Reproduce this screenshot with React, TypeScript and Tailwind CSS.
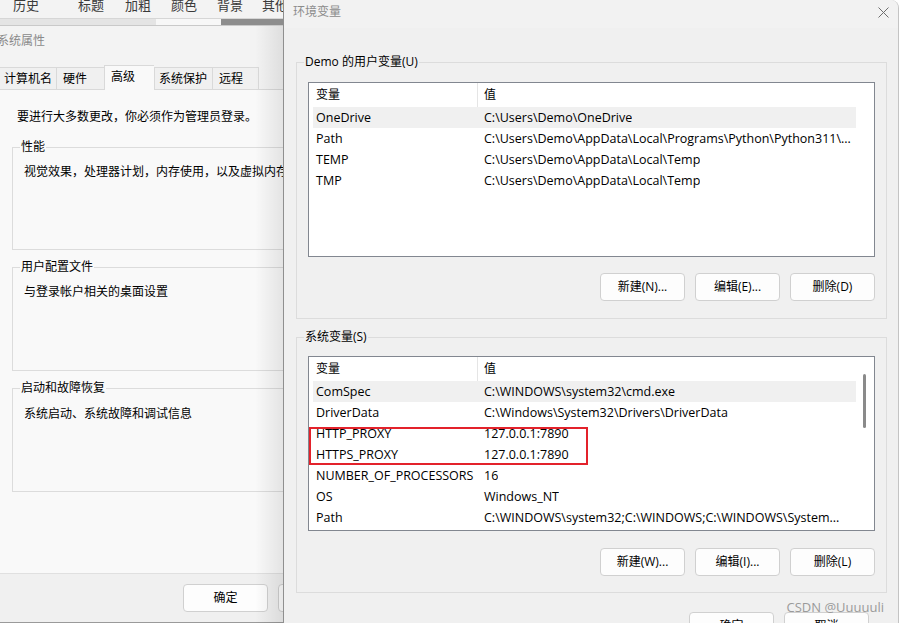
import React from "react";

type Row = [string, string];

const userVars: Row[] = [
  ["OneDrive", "C:\\Users\\Demo\\OneDrive"],
  ["Path", "C:\\Users\\Demo\\AppData\\Local\\Programs\\Python\\Python311\\..."],
  ["TEMP", "C:\\Users\\Demo\\AppData\\Local\\Temp"],
  ["TMP", "C:\\Users\\Demo\\AppData\\Local\\Temp"],
];

const sysVars: Row[] = [
  ["ComSpec", "C:\\WINDOWS\\system32\\cmd.exe"],
  ["DriverData", "C:\\Windows\\System32\\Drivers\\DriverData"],
  ["HTTP_PROXY", "127.0.0.1:7890"],
  ["HTTPS_PROXY", "127.0.0.1:7890"],
  ["NUMBER_OF_PROCESSORS", "16"],
  ["OS", "Windows_NT"],
  ["Path", "C:\\WINDOWS\\system32;C:\\WINDOWS;C:\\WINDOWS\\System..."],
];

function Btn({ label }: { label: string }) {
  return (
    <div className="w-[85px] h-[28px] shrink-0 rounded-[4px] border border-[#d0d0d0] bg-[#fdfdfd] flex items-center justify-center text-[12px] text-black">
      {label}
    </div>
  );
}

function ListView({ rows, scroll, children }: { rows: Row[]; scroll?: boolean; children?: React.ReactNode }) {
  return (
    <div className="relative h-[175px] border border-[#828790] bg-white flex overflow-hidden">
      <div className="flex-1 pl-[4px] min-w-0">
        <div className="h-[24px] flex items-center">
          <div className="w-[165px] h-full border-r border-[#e5e5e5] pl-[3px] flex items-center">变量</div>
          <div className="pl-[6px]">值</div>
        </div>
        {rows.map((r, i) => (
          <div key={r[0]} className={`h-[21px] flex items-center whitespace-nowrap text-[12.5px] ${i === 0 ? "bg-[#f0f0f0]" : ""}`}>
            <div className="w-[166px] pl-[3px] shrink-0">{r[0]}</div>
            <div className="pl-[5px] overflow-hidden">{r[1]}</div>
          </div>
        ))}
      </div>
      <div className="w-[18px] shrink-0 relative">
        {scroll && <div className="ml-[7px] mt-[17px] w-[3px] h-[54px] rounded-full bg-[#8a8a8a]" />}
      </div>
      {children}
    </div>
  );
}

function Group({ title, children, className = "" }: { title: string; children: React.ReactNode; className?: string }) {
  return (
    <fieldset className={`min-w-0 border border-[#dcdcdc] px-[7px] ${className}`}>
      <legend className="px-px leading-[16px]">{title}</legend>
      {children}
    </fieldset>
  );
}

export default function App() {
  return (
    <div className="w-[900px] h-[623px] overflow-hidden bg-white flex text-[12px] text-black leading-[16px] font-['Open_Sans','Noto_Sans_CJK_SC',sans-serif]">
      {/* background window: 系统属性 */}
      <div className="relative w-[283px] h-[623px] shrink-0 overflow-hidden">
        <div className="w-[468px] h-[623px] flex flex-col bg-[#f9f9f9]">
          <div className="h-[19px] shrink-0 bg-[#f3f3f3] border-b border-[#d6d6d6] flex text-[13px] leading-[13px] text-[#3a3a3a] overflow-hidden">
            <span className="ml-[13px] -mt-[1px]">历史</span>
            <span className="ml-[39px] -mt-[1px]">标题</span>
            <span className="ml-[21px] -mt-[1px]">加粗</span>
            <span className="ml-[20px] -mt-[1px]">颜色</span>
            <span className="ml-[20px] -mt-[1px]">背景</span>
            <span className="ml-[19px] -mt-[1px]">其他</span>
          </div>
          <div className="h-[7px] shrink-0 flex border-b border-[#c9c9c9]">
            <div className="w-[156px] bg-[#e4e4e4]" />
            <div className="w-[65px] bg-[#f7f7f7]" />
            <div className="w-[62px] bg-[#8d8d8d]" />
            <div className="flex-1 bg-[#e4e4e4]" />
          </div>
          <div className="bg-[#f3f3f3]">
            <div className="h-[39px] pt-[7px] -ml-[3px] text-[#8a8a8a]">系统属性</div>
            <div className="h-[25px] flex items-end border-b border-[#d9d9d9] -ml-[4px]">
              <div className="w-[60px] h-[22px] border-t border-l border-[#d9d9d9] bg-[#f0f0f0] pl-[7px] flex items-center">计算机名</div>
              <div className="w-[48px] h-[22px] border-t border-l border-[#d9d9d9] bg-[#f0f0f0] pl-[6px] flex items-center">硬件</div>
              <div className="w-[50px] h-[25px] -mb-px border-t border-l border-[#d9d9d9] bg-[#f9f9f9] pl-[6px] pb-[2px] flex items-center">高级</div>
              <div className="w-[58px] h-[22px] border-t border-l border-[#d9d9d9] bg-[#f0f0f0] pl-[4px] flex items-center">系统保护</div>
              <div className="w-[47px] h-[22px] border-t border-l border-r border-[#d9d9d9] bg-[#f0f0f0] pl-[6px] flex items-center">远程</div>
            </div>
          </div>
          <div className="flex-1 px-[12px]">
            <div className="mt-[19px] pl-[5px]">要进行大多数更改，你必须作为管理员登录。</div>
            <Group title="性能" className="mt-[14px] h-[111px]">
              <div className="mt-[9px] pl-[4px]">视觉效果，处理器计划，内存使用，以及虚拟内存</div>
            </Group>
            <Group title="用户配置文件" className="mt-[9px] h-[112px]">
              <div className="mt-[9px] pl-[4px]">与登录帐户相关的桌面设置</div>
            </Group>
            <Group title="启动和故障恢复" className="mt-[9px] h-[112px]">
              <div className="mt-[10px] pl-[4px]">系统启动、系统故障和调试信息</div>
            </Group>
          </div>
          <div className="h-[50px] shrink-0 bg-[#f0f0f0] border-t border-[#e0e0e0] border-b border-b-[#9a9a9a] flex justify-end gap-[10px] pr-[10px] pt-[10px]">
            <Btn label="确定" />
            <Btn label="取消" />
            <Btn label="应用(A)" />
          </div>
        </div>
        <div className="absolute right-0 top-[26px] bottom-0 w-[28px] bg-linear-to-l from-[#00000016] to-transparent" />
      </div>

      {/* 环境变量 dialog */}
      <div className="relative w-[616px] h-[623px] shrink-0 bg-[#f0f0f0] border-l border-[#8f8f8f] border-r border-r-[#c4c4c4] rounded-tr-[8px]">
        <div className="h-[28px] flex items-start justify-between bg-[#f2f2f2] rounded-tr-[8px]">
          <div className="pl-[9px] pt-[4px] text-[#8c8c8c]">环境变量</div>
          <svg className="mt-[7px] mr-[9px]" width="11" height="11" viewBox="0 0 11 11">
            <path d="M0.5 0.5 L10.5 10.5 M10.5 0.5 L0.5 10.5" stroke="#6e6e6e" strokeWidth="1" />
          </svg>
        </div>
        <div className="pl-[12px] pr-[11px]">
          <Group title="Demo 的用户变量(U)" className="mt-[26px] pb-[17px]">
            <div className="mx-[4px] mt-[12px]">
              <ListView rows={userVars} />
              <div className="mt-[16px] flex justify-end gap-[10px]">
                <Btn label="新建(N)..." />
                <Btn label="编辑(E)..." />
                <Btn label="删除(D)" />
              </div>
            </div>
          </Group>
          <Group title="系统变量(S)" className="mt-[10px] pb-[16px]">
            <div className="mx-[4px] mt-[11px]">
              <ListView rows={sysVars} scroll>
                <div className="absolute left-0 top-[70px] w-[279px] h-[38px] border-2 border-[#e3222b]" />
              </ListView>
              <div className="mt-[17px] flex justify-end gap-[10px]">
                <Btn label="新建(W)..." />
                <Btn label="编辑(I)..." />
                <Btn label="删除(L)" />
              </div>
            </div>
          </Group>
          <div className="mt-[19px] flex justify-end gap-[10px] pr-[18px]">
            <Btn label="确定" />
            <Btn label="取消" />
          </div>
        </div>
        <div className="absolute right-[14px] top-[599px] text-[13px] text-[#9a9a9a]">CSDN @Uuuuuli</div>
      </div>
    </div>
  );
}
